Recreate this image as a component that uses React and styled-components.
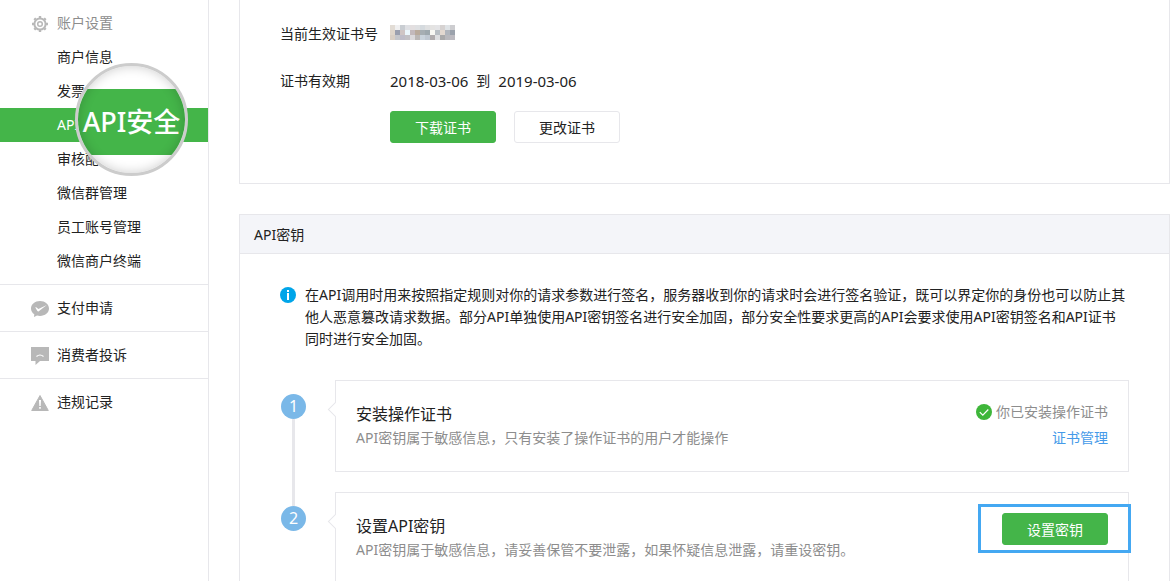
import React from 'react';
import styled, { createGlobalStyle } from 'styled-components';

const GlobalStyle = createGlobalStyle`
    * {
        box-sizing: border-box;
    }
    body {
        margin: 0;
        background: #fff;
        color: #222;
        font-family: "Noto Sans", "Noto Sans CJK SC", sans-serif;
        font-size: 14px;
        line-height: 22px;
    }
    h2, h3, p, ul, ol, dl, dd {
        margin: 0;
        padding: 0;
        font-weight: normal;
    }
    ul, ol {
        list-style: none;
    }
    a {
        text-decoration: none;
    }
    button {
        font: inherit;
        cursor: pointer;
    }
`;

const Page = styled.div`
    display: flex;
    height: 100vh;
    overflow: hidden;
`;

const Sidebar = styled.nav`
    flex: 0 0 209px;
    border-right: 1px solid #e7e7eb;
`;

const Group = styled.div`
    padding: ${props => props.$open ? '6px 0' : '12px 0'};
    border-bottom: ${props => props.$last ? 'none' : '1px solid #e7e7eb'};
`;

const GroupTitle = styled.a`
    display: flex;
    align-items: center;
    gap: 8px;
    padding: ${props => props.$open ? '6px 0 6px 31px' : '0 0 0 31px'};
    color: ${props => props.$open ? '#8d8d8d' : '#222'};

    svg {
        width: 18px;
        height: 18px;
        margin-top: 2px;
    }
`;

const MenuItem = styled.li`
    position: relative;
`;

const MenuLink = styled.a`
    display: block;
    padding: 6px 0 6px 57px;
    color: ${props => props.$active ? '#fff' : '#222'};
    background: ${props => props.$active ? '#44b549' : 'transparent'};
`;

const Magnifier = styled.div`
    position: absolute;
    z-index: 1;
    left: 75px;
    top: -45px;
    display: flex;
    align-items: center;
    width: 113px;
    height: 113px;
    padding-top: 4px;
    border: 3px solid #ccc;
    border-radius: 50%;
    overflow: hidden;
    background: #fff;

    &::after {
        content: '';
        position: absolute;
        inset: 0;
        border-radius: 50%;
        box-shadow: inset 0 0 12px rgba(0, 0, 0, 0.2);
    }
`;

const Magnified = styled.span`
    flex: 1;
    height: 66px;
    line-height: 66px;
    font-size: 27px;
    font-weight: 500;
    text-align: center;
    white-space: nowrap;
    color: #fff;
    background: #44b549;
`;

const Content = styled.main`
    flex: 1;
    min-width: 0;
    margin-left: 30px;
`;

const Panel = styled.section`
    border: 1px solid #e7e7eb;
    border-top-width: ${props => props.$cut ? '0' : '1px'};
    margin-bottom: 30px;
`;

const PanelTitle = styled.h2`
    padding: 9px 14px 7px;
    font-size: 14px;
    background: #f4f5f9;
    border-bottom: 1px solid #e7e7eb;
`;

const Details = styled.dl`
    display: grid;
    grid-template-columns: 110px 1fr;
    row-gap: 25px;
    padding: 23px 40px 19px;
`;

const Period = styled.dd`
    display: flex;
    gap: 8px;
`;

const DateText = styled.time`
    font-size: 15px;
`;

const Mosaic = styled.svg`
    display: block;
    margin-top: 2px;
`;

const Actions = styled.div`
    display: flex;
    gap: 18px;
    padding: 0 40px 40px 150px;
`;

const Button = styled.button`
    width: 106px;
    height: 32px;
    padding: 1px 0 0;
    border: 1px solid ${props => props.$primary ? '#44b549' : '#e7e7eb'};
    border-radius: 3px;
    color: ${props => props.$primary ? '#fff' : '#222'};
    background: ${props => props.$primary ? '#44b549' : '#fff'};
`;

const PanelBody = styled.div`
    padding: 30px 40px;
`;

const Notice = styled.div`
    display: flex;
    gap: 9px;
    margin-bottom: 30px;

    svg {
        flex: none;
        margin-top: 3px;
    }
`;

const Step = styled.li`
    display: flex;
    gap: 28px;
`;

const Rail = styled.div`
    display: flex;
    flex-direction: column;
    align-items: center;
    width: 27px;

    &::before {
        content: '';
        height: 14px;
        width: 3px;
        background: ${props => props.$first ? 'transparent' : '#e7e7eb'};
    }
    &::after {
        content: '';
        flex: 1;
        width: 3px;
        background: ${props => props.$last ? 'transparent' : '#e7e7eb'};
    }
`;

const StepNumber = styled.span`
    width: 25px;
    height: 25px;
    border-radius: 50%;
    line-height: 25px;
    font-size: 16px;
    text-align: center;
    color: #fff;
    background: #7ab8e8;
`;

const StepCard = styled.div`
    position: relative;
    flex: 1;
    display: flex;
    justify-content: space-between;
    min-height: 92px;
    margin-bottom: 20px;
    padding: 20px;
    border: 1px solid #e7e7eb;

    &::before {
        content: '';
        position: absolute;
        left: -6px;
        top: 23px;
        width: 10px;
        height: 10px;
        transform: rotate(45deg);
        border: 1px solid #e7e7eb;
        border-width: 0 0 1px 1px;
        background: #fff;
    }
`;

const StepTitle = styled.h3`
    font-size: 16px;
    line-height: 26px;
`;

const StepText = styled.p`
    color: #8d8d8d;
`;

const StepSide = styled.div`
    text-align: right;
    line-height: 26px;
`;

const Installed = styled.p`
    display: flex;
    align-items: center;
    gap: 4px;
    margin-top: -2px;
    color: #8d8d8d;
`;

const TextLink = styled.a`
    color: #459ae9;
`;

const Highlight = styled.span`
    position: absolute;
    right: -3px;
    top: 11px;
    padding: 6px 20px 5px 21px;
    border: 3px solid #44a8f2;

    button {
        display: block;
    }
`;

const GearIcon = () => (
    <svg viewBox="0 0 18 18" fill="none" stroke="#b8b8b8" aria-hidden="true">
        <circle cx="9" cy="9" r="5.6" strokeWidth="2" />
        <circle cx="9" cy="9" r="2.3" strokeWidth="1.5" />
        <path strokeWidth="2.4" d="M9 1v2M9 15v2M1 9h2M15 9h2M3.300 3.300l1.400 1.400M13.300 13.300l1.400 1.400M3.300 14.700l1.400-1.400M13.300 4.700l1.400-1.400" />
    </svg>
);

const PayIcon = () => (
    <svg viewBox="0 0 18 18" aria-hidden="true">
        <path fill="#b8b8b8" d="M9 1C4 1 0 4.300 0 8.500c0 2.400 1.300 4.500 3.300 5.800L3 17l3-1.500c1 .3 2 .4 3 .4 5 0 9-3.300 9-7.400S14 1 9 1z" />
        <path fill="#fff" d="M4.300 7.600c.3-.4.8-.4 1.200-.1L7.400 9l8.400-4L7.800 11.300c-.6.4-1 .3-1.400-.2z" />
    </svg>
);

const ComplaintIcon = () => (
    <svg viewBox="0 0 18 18" aria-hidden="true">
        <path fill="#b8b8b8" d="M0 0h18v14H9l-4.500 4v-4H0z" />
        <path fill="none" stroke="#fff" strokeWidth="1.200" d="M5.500 9.500q3.500-3 7 0" />
    </svg>
);

const WarnIcon = () => (
    <svg viewBox="0 0 18 18" aria-hidden="true">
        <path fill="#b8b8b8" stroke="#b8b8b8" strokeLinejoin="round" d="M9 1.500l8.300 15H.7z" />
        <path fill="#fff" d="M8 6h2l-.3 6H8.300zM8.200 13h1.600v1.800H8.200z" />
    </svg>
);

const InfoIcon = () => (
    <svg width="16" height="16" viewBox="0 0 16 16" aria-hidden="true">
        <circle cx="8" cy="8" r="8" fill="#00a5e9" />
        <path fill="#fff" d="M7 3h2v2H7zM7 6h2v7H7z" />
    </svg>
);

const DoneIcon = () => (
    <svg width="16" height="16" viewBox="0 0 16 16" aria-hidden="true">
        <circle cx="8" cy="8" r="8" fill="#3eb63a" />
        <path fill="none" stroke="#fff" strokeWidth="1.200" d="M3.800 8.200l3 3 5.500-5.700" />
    </svg>
);

const mosaicRows = [
    ['#e2dcd5', '#f0f0f1', '#c9cdd2', '#dfe0e4', '#e3dfe0', '#dfe0e2', '#d5dade', '#dfe0e1', '#e4e3e2', '#e4e4e6', '#d6d2d1', '#dfe3e6', '#cdcdd0'],
    ['#dfd6cb', '#9a9fae', '#cfc5c4', '#ebf6fb', '#c3b9bc', '#b9aa9c', '#a6aeb3', '#9da8ae', '#f8f8f3', '#b9bfc4', '#e3d8d0', '#b1b5bd', '#9ba2ac'],
    ['#d9cfc4', '#c4c6cb', '#bfbdc8', '#c3c1c5', '#dbd9dc', '#bbb7b6', '#c9d3dc', '#bfc8d2', '#b0acad', '#dedfe1', '#aaa9aa', '#b9b8bd', '#bcbac0'],
];

const menu = ['商户信息', '发票信息', 'API安全', '审核配置', '微信群管理', '员工账号管理', '微信商户终端'];

const others = [
    { name: '支付申请', Icon: PayIcon },
    { name: '消费者投诉', Icon: ComplaintIcon },
    { name: '违规记录', Icon: WarnIcon },
];

const App = () => (
    <Page>
        <GlobalStyle />
        <Sidebar>
            <Group $open>
                <GroupTitle $open href="#account"><GearIcon />账户设置</GroupTitle>
                <ul>
                    {menu.map(name => (
                        <MenuItem key={name}>
                            <MenuLink href="#menu" $active={name === 'API安全'}>{name}</MenuLink>
                            {name === 'API安全' && <Magnifier><Magnified>API安全</Magnified></Magnifier>}
                        </MenuItem>
                    ))}
                </ul>
            </Group>
            {others.map(({ name, Icon }, i) => (
                <Group key={name} $last={i === others.length - 1}>
                    <GroupTitle href="#group"><Icon />{name}</GroupTitle>
                </Group>
            ))}
        </Sidebar>

        <Content>
            <Panel $cut>
                <Details>
                    <dt>当前生效证书号</dt>
                    <dd>
                        <Mosaic width="65" height="15" shapeRendering="crispEdges" aria-hidden="true">
                            {mosaicRows.map((row, y) => row.map((color, x) => (
                                <rect key={`${x}-${y}`} x={x * 5} y={y * 5} width="5" height="5" fill={color} />
                            )))}
                        </Mosaic>
                    </dd>
                    <dt>证书有效期</dt>
                    <Period>
                        <DateText>2018-03-06</DateText>
                        <span>到</span>
                        <DateText>2019-03-06</DateText>
                    </Period>
                </Details>
                <Actions>
                    <Button $primary>下载证书</Button>
                    <Button>更改证书</Button>
                </Actions>
            </Panel>

            <Panel>
                <PanelTitle>API密钥</PanelTitle>
                <PanelBody>
                    <Notice>
                        <InfoIcon />
                        <p>在API调用时用来按照指定规则对你的请求参数进行签名，服务器收到你的请求时会进行签名验证，既可以界定你的身份也可以防止其他人恶意篡改请求数据。部分API单独使用API密钥签名进行安全加固，部分安全性要求更高的API会要求使用API密钥签名和API证书同时进行安全加固。</p>
                    </Notice>
                    <ol>
                        <Step>
                            <Rail $first><StepNumber>1</StepNumber></Rail>
                            <StepCard>
                                <div>
                                    <StepTitle>安装操作证书</StepTitle>
                                    <StepText>API密钥属于敏感信息，只有安装了操作证书的用户才能操作</StepText>
                                </div>
                                <StepSide>
                                    <Installed><DoneIcon />你已安装操作证书</Installed>
                                    <TextLink href="#cert">证书管理</TextLink>
                                </StepSide>
                            </StepCard>
                        </Step>
                        <Step>
                            <Rail $last><StepNumber>2</StepNumber></Rail>
                            <StepCard>
                                <div>
                                    <StepTitle>设置API密钥</StepTitle>
                                    <StepText>API密钥属于敏感信息，请妥善保管不要泄露，如果怀疑信息泄露，请重设密钥。</StepText>
                                </div>
                                <Highlight><Button $primary>设置密钥</Button></Highlight>
                            </StepCard>
                        </Step>
                    </ol>
                </PanelBody>
            </Panel>
        </Content>
    </Page>
);

export default App;
